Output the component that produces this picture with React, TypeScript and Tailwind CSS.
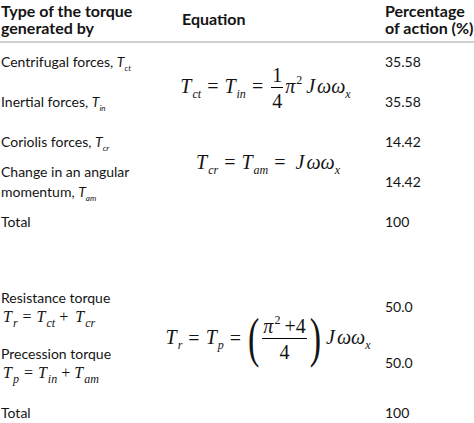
import React from "react";

const sans = "font-['Lato','Open_Sans',sans-serif]";
const serif = "font-['Liberation_Serif','Times_New_Roman',serif]";

// italic variable with an optional lowered subscript
const Sym = ({ v, sub }: { v: string; sub?: string }) => (
  <span className="italic">
    {v}
    {sub && <span className="text-[12px] align-[-0.45em] ml-[1px]">{sub}</span>}
  </span>
);

const Eq = () => <span className="mx-[6px] not-italic">=</span>;

const Frac = ({ top, bottom }: { top: React.ReactNode; bottom: React.ReactNode }) => (
  <span className="inline-flex flex-col items-center align-middle mx-[2px]">
    <span className="leading-none pb-[2px] px-[1px]">{top}</span>
    <span className="w-full border-t border-black" />
    <span className="leading-none pt-[3px]">{bottom}</span>
  </span>
);

const Pi2 = () => (
  <span>
    <span className="italic">π</span>
    <span className="text-[12px] align-[0.7em] ml-[1px]">2</span>
  </span>
);

const JWW = () => (
  <span className="ml-[4px]">
    <span className="italic">J</span>
    <span className="italic ml-[2px]">ωω</span>
    <span className="italic text-[12px] align-[-0.45em]">x</span>
  </span>
);

// T with a small subscript inside body text
const TextT = ({ sub }: { sub: string }) => (
  <span className="italic">
    T<span className="text-[8px] align-[-0.5em]">{sub}</span>
  </span>
);

const Cell = ({ className = "", children }: { className?: string; children: React.ReactNode }) => (
  <div className={`text-[14px] leading-[20px] ${className}`}>{children}</div>
);

export default function App() {
  return (
    <div className={`w-[474px] h-[423px] overflow-hidden bg-white text-[#141414] ${sans}`}>
      {/* Header */}
      <div className="grid grid-cols-[170px_215px_89px] h-[43px] border-b-2 border-[#cfcfcf] font-bold text-[16px] leading-[17px]">
        <div className="pt-[2px] pl-[1px]">
          Type of the torque
          <br />
          generated by
        </div>
        <div className="pt-[10px] pl-[12px]">Equation</div>
        <div className="pt-[2px] whitespace-nowrap">
          Percentage
          <br />
          of action (%)
        </div>
      </div>

      {/* Body */}
      <div className="grid grid-cols-[170px_215px_89px] grid-rows-[40px_40px_30px_50px_29px_50px_56px_56px_29px]">
        <Cell className="col-start-1 row-start-1 pt-[9px] pl-[1px]">
          Centrifugal forces, <TextT sub="ct" />
        </Cell>
        <Cell className="col-start-3 row-start-1 pt-[9px]">35.58</Cell>

        <Cell className="col-start-1 row-start-2 pt-[9px] pl-[1px]">
          Inertial forces, <TextT sub="in" />
        </Cell>
        <Cell className="col-start-3 row-start-2 pt-[9px]">35.58</Cell>

        <div className={`col-start-2 row-start-1 row-span-2 flex items-center justify-center pr-[24px] pt-[10px] text-[20px] ${serif}`}>
          <span className="whitespace-nowrap">
            <Sym v="T" sub="ct" />
            <Eq />
            <Sym v="T" sub="in" />
            <Eq />
            <Frac top="1" bottom="4" />
            <Pi2 />
            <JWW />
          </span>
        </div>

        <Cell className="col-start-1 row-start-3 pt-[9px] pl-[1px]">
          Coriolis forces, <TextT sub="cr" />
        </Cell>
        <Cell className="col-start-3 row-start-3 pt-[9px]">14.42</Cell>

        <Cell className="col-start-1 row-start-4 pt-[9px] pl-[1px]">
          Change in an angular
          <br />
          momentum, <TextT sub="am" />
        </Cell>
        <Cell className="col-start-3 row-start-4 pt-[19px]">14.42</Cell>

        <div className={`col-start-2 row-start-3 row-span-2 flex items-center justify-center pr-[19px] text-[20px] ${serif}`}>
          <span className="whitespace-nowrap">
            <Sym v="T" sub="cr" />
            <Eq />
            <Sym v="T" sub="am" />
            <Eq />
            <JWW />
          </span>
        </div>

        <Cell className="col-start-1 row-start-5 pt-[9px] pl-[1px]">Total</Cell>
        <Cell className="col-start-3 row-start-5 pt-[9px]">100</Cell>

        {/* Lower block */}
        <div className="col-start-1 row-start-7 pt-[6px] pl-[1px]">
          <div className="text-[14px] leading-[20px]">Resistance torque</div>
          <div className={`text-[16px] leading-[18px] pl-[2px] ${serif}`}>
            <Sym v="T" sub="r" />
            <span className="mx-[5px]">=</span>
            <Sym v="T" sub="ct" />
            <span className="mx-[4px]">+</span>
            <span className="ml-[3px]">
              <Sym v="T" sub="cr" />
            </span>
          </div>
        </div>
        <Cell className="col-start-3 row-start-7 pt-[15px]">50.0</Cell>

        <div className="col-start-1 row-start-8 pt-[6px] pl-[1px]">
          <div className="text-[14px] leading-[20px]">Precession torque</div>
          <div className={`text-[16px] leading-[18px] pl-[2px] ${serif}`}>
            <Sym v="T" sub="p" />
            <span className="mx-[5px]">=</span>
            <Sym v="T" sub="in" />
            <span className="mx-[4px]">+</span>
            <Sym v="T" sub="am" />
          </div>
        </div>
        <Cell className="col-start-3 row-start-8 pt-[15px]">50.0</Cell>

        <div className={`col-start-2 row-start-7 row-span-2 flex items-center justify-center pr-[19px] text-[20px] ${serif}`}>
          <span className="whitespace-nowrap inline-flex items-center">
            <Sym v="T" sub="r" />
            <Eq />
            <Sym v="T" sub="p" />
            <Eq />
            <span className="inline-block text-[34px] font-light scale-y-[1.6] leading-none mx-[1px]">(</span>
            <Frac
              top={
                <span>
                  <Pi2 />
                  <span className="ml-[4px]">+4</span>
                </span>
              }
              bottom="4"
            />
            <span className="inline-block text-[34px] font-light scale-y-[1.6] leading-none mx-[1px]">)</span>
            <JWW />
          </span>
        </div>

        <Cell className="col-start-1 row-start-9 pt-[9px] pl-[1px]">Total</Cell>
        <Cell className="col-start-3 row-start-9 pt-[9px]">100</Cell>
      </div>
    </div>
  );
}
